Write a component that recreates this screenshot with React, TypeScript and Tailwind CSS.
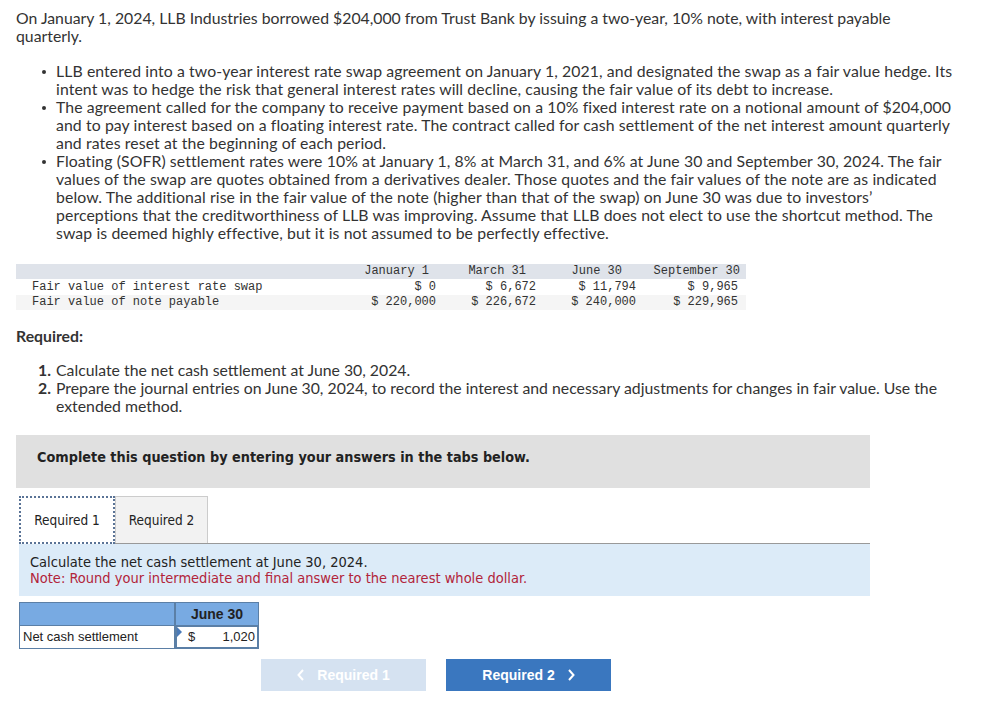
import React from "react";

const body = { fontFamily: "Lato, 'Open Sans', sans-serif" };
const mono = { fontFamily: "'Liberation Mono', 'DejaVu Sans Mono', monospace" };
const verd = { fontFamily: "'DejaVu Sans Condensed', 'DejaVu Sans', Verdana, sans-serif" };
const arial = { fontFamily: "'Liberation Sans', Arial, sans-serif" };
const narrow = { fontFamily: "'Liberation Sans Narrow', 'Liberation Sans', Arial, sans-serif" };

function Bullet({ children }: { children: React.ReactNode }) {
  return (
    <li className="flex">
      <span className="w-[40px] shrink-0 flex justify-end pr-[10px] pt-[8px]">
        <span className="w-[4px] h-[4px] rounded-full bg-[#333]" />
      </span>
      <span>{children}</span>
    </li>
  );
}

export default function App() {
  return (
    <div className="w-[990px] h-[703px] bg-white text-[#333] overflow-hidden relative">
      <div style={body} className="pl-[16px] pt-[9px] text-[15.8px] leading-[18px] text-[#333]">
        <p>
          On January 1, 2024, LLB Industries borrowed $204,000 from Trust Bank by issuing a two-year, 10% note, with interest payable
          <br />
          quarterly.
        </p>
        <ul className="mt-[17px] tracking-[0.1px]">
          <Bullet>
            LLB entered into a two-year interest rate swap agreement on January 1, 2021, and designated the swap as a fair value hedge. Its
            <br />
            intent was to hedge the risk that general interest rates will decline, causing the fair value of its debt to increase.
          </Bullet>
          <Bullet>
            The agreement called for the company to receive payment based on a 10% fixed interest rate on a notional amount of $204,000
            <br />
            and to pay interest based on a floating interest rate. The contract called for cash settlement of the net interest amount quarterly
            <br />
            and rates reset at the beginning of each period.
          </Bullet>
          <Bullet>
            Floating (SOFR) settlement rates were 10% at January 1, 8% at March 31, and 6% at June 30 and September 30, 2024. The fair
            <br />
            values of the swap are quotes obtained from a derivatives dealer. Those quotes and the fair values of the note are as indicated
            <br />
            below. The additional rise in the fair value of the note (higher than that of the swap) on June 30 was due to investors’
            <br />
            perceptions that the creditworthiness of LLB was improving. Assume that LLB does not elect to use the shortcut method. The
            <br />
            swap is deemed highly effective, but it is not assumed to be perfectly effective.
          </Bullet>
        </ul>
      </div>

      {/* Mono table */}
      <div style={mono} className="ml-[16px] mt-[22px] w-[730px] text-[12px] leading-[15px] text-[#333]">
        <div className="grid grid-cols-[330px_100px_100px_100px_100px] bg-[#dfe3ea] h-[15px]">
          <div />
          <div className="text-right pr-[17px]">January 1</div>
          <div className="text-right pr-[20px]">March 31</div>
          <div className="text-right pr-[24px]">June 30</div>
          <div className="text-right pr-[6px]">September 30</div>
        </div>
        <div className="grid grid-cols-[330px_100px_100px_100px_100px] h-[15px] mt-[1px]">
          <div className="pl-[16px]">Fair value of interest rate swap</div>
          <div className="text-right pr-[10px]">$ 0</div>
          <div className="text-right pr-[10px]">$ 6,672</div>
          <div className="text-right pr-[10px]">$ 11,794</div>
          <div className="text-right pr-[8px]">$ 9,965</div>
        </div>
        <div className="grid grid-cols-[330px_100px_100px_100px_100px] h-[15px] bg-[#f5f5f5]">
          <div className="pl-[16px]">Fair value of note payable</div>
          <div className="text-right pr-[10px]">$ 220,000</div>
          <div className="text-right pr-[10px]">$ 226,672</div>
          <div className="text-right pr-[10px]">$ 240,000</div>
          <div className="text-right pr-[8px]">$ 229,965</div>
        </div>
      </div>

      <div style={body} className="pl-[16px] mt-[17px] text-[15.8px] leading-[18px] text-[#333]">
        <p className="font-bold">Required:</p>
        <ol className="mt-[16px]">
          <li className="flex">
            <span className="w-[40px] shrink-0 text-right pr-[5px] font-bold">1.</span>
            <span>Calculate the net cash settlement at June 30, 2024.</span>
          </li>
          <li className="flex">
            <span className="w-[40px] shrink-0 text-right pr-[5px] font-bold">2.</span>
            <span>
              Prepare the journal entries on June 30, 2024, to record the interest and necessary adjustments for changes in fair value. Use the
              <br />
              extended method.
            </span>
          </li>
        </ol>
      </div>

      <div style={verd} className="ml-[16px] mt-[20px] w-[854px] h-[53px] bg-[#e0e0e0] flex items-center pl-[21px] pb-[8px]">
        <span className="font-bold text-[14.3px] text-[#222]">Complete this question by entering your answers in the tabs below.</span>
      </div>

      <div style={verd} className="ml-[19px] mt-[8px] w-[851px]">
        <div className="flex items-end h-[48px] border-b border-[#999]">
          <div className="h-[48px] w-[96px] border-2 border-dotted border-[#5a7396] bg-white flex items-center justify-center text-[13.5px] text-[#222] -mb-px relative z-10 whitespace-nowrap">
            Required 1
          </div>
          <div className="h-[47px] w-[93px] border border-[#ccc] border-b-0 bg-[#f2f2f2] flex items-center justify-center text-[13.5px] text-[#222] whitespace-nowrap">
            Required 2
          </div>
        </div>
        <div className="bg-[#dcebf8] h-[52px] pl-[11px] pt-[10px] text-[14.5px] leading-[16px]">
          <div className="text-[#222]">Calculate the net cash settlement at June 30, 2024.</div>
          <div className="text-[#b2243a]">Note: Round your intermediate and final answer to the nearest whole dollar.</div>
        </div>
      </div>

      <div style={arial} className="ml-[19px] mt-[6px] w-[240px] text-[13px] text-[#222]">
        <div className="flex h-[24px] bg-[#78aae2] border border-[#5b7fa6]">
          <div className="w-[156px] border-r-2 border-[#5b7fa6]" />
          <div className="flex-1 flex items-center justify-center font-bold text-[14px] pt-[1px]">June 30</div>
        </div>
        <div className="flex h-[23px] border border-t-0 border-[#5b7fa6] bg-white">
          <div className="w-[156px] border-r-2 border-[#5b7fa6] flex items-center pl-[3px]">Net cash settlement</div>
          <div className="flex-1 flex items-center justify-between pl-[11px] pr-[2px] relative border border-[#5b7fa6]">
            <span className="absolute left-0 top-0 w-0 h-0 border-t-[5px] border-b-[5px] border-l-[5px] border-t-transparent border-b-transparent border-l-[#4a7ab8]" />
            <span>$</span>
            <span>1,020</span>
          </div>
        </div>
      </div>

      <div style={narrow} className="flex gap-[20px] ml-[261px] mt-[10px]">
        <div className="w-[165px] h-[32px] bg-[#d5e2f1] flex items-center justify-center text-white font-bold text-[14px] gap-[12px]">
          <svg width="8" height="12" viewBox="0 0 8 12"><path d="M6 1L1.5 6L6 11" stroke="white" strokeWidth="2" fill="none" /></svg>
          <span>Required 1</span>
        </div>
        <div className="w-[165px] h-[32px] bg-[#3a77bf] flex items-center justify-center text-white font-bold text-[14px] gap-[12px]">
          <span>Required 2</span>
          <svg width="8" height="12" viewBox="0 0 8 12"><path d="M2 1L6.5 6L2 11" stroke="white" strokeWidth="2" fill="none" /></svg>
        </div>
      </div>
    </div>
  );
}
